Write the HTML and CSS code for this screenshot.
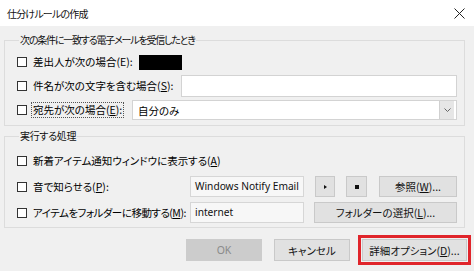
FILE: index.html
```html
<!DOCTYPE html>
<html lang="ja">
<head>
    <meta charset="UTF-8">
    <meta name="viewport" content="width=device-width, initial-scale=1.0">
    <title>仕分けルールの作成</title>
    <link rel="stylesheet" href="styles.css">
</head>
<body>
    <div class="window">
        <div class="titlebar">
            <span class="title">仕分けルールの作成</span>
            <svg class="close" width="11" height="11" viewBox="0 0 11 11">
                <path d="M0.5 0.5 L10.5 10.5 M10.5 0.5 L0.5 10.5" stroke="#222" stroke-width="1" fill="none"/>
            </svg>
        </div>

        <div class="content">
            <fieldset class="group group-cond">
                <legend class="tight">次の条件に一致する電子メールを受信したとき</legend>
                <div class="row">
                    <span class="check"></span>
                    <span class="label">差出人が次の場合(E):</span>
                    <span class="redacted"></span>
                </div>
                <div class="row">
                    <span class="check"></span>
                    <span class="label">件名が次の文字を含む場合(<u>S</u>):</span>
                    <span class="textbox subject"></span>
                </div>
                <div class="row">
                    <span class="check"></span>
                    <span class="label focused">宛先が次の場合(<u>E</u>):</span>
                    <span class="select">
                        <span class="select-text">自分のみ</span>
                        <span class="select-btn">
                            <svg width="7" height="4" viewBox="0 0 7 4"><path d="M0.5 0.5 L3.5 3.5 L6.5 0.5" stroke="#666" fill="none"/></svg>
                        </span>
                    </span>
                </div>
            </fieldset>

            <fieldset class="group group-action">
                <legend>実行する処理</legend>
                <div class="row">
                    <span class="check"></span>
                    <span class="label">新着アイテム通知ウィンドウに表示する(<u>A</u>)</span>
                </div>
                <div class="row row-grid">
                    <span class="lead">
                        <span class="check"></span>
                        <span class="label">音で知らせる(<u>P</u>):</span>
                    </span>
                    <span class="textbox readonly latin">Windows Notify Email</span>
                    <button class="btn btn-icon"><span class="play"></span></button>
                    <button class="btn btn-icon stop-btn"><span class="stop"></span></button>
                    <button class="btn btn-browse">参照(<u>W</u>)...</button>
                </div>
                <div class="row row-grid">
                    <span class="lead">
                        <span class="check"></span>
                        <span class="label narrow">アイテムをフォルダーに移動する(<u>M</u>):</span>
                    </span>
                    <span class="textbox readonly latin">internet</span>
                    <button class="btn btn-folder">フォルダーの選択(<u>L</u>)...</button>
                </div>
            </fieldset>

            <div class="buttons">
                <button class="btn btn-main" disabled>OK</button>
                <button class="btn btn-main">キャンセル</button>
                <button class="btn btn-advanced">詳細オプション(<u>D</u>)...</button>
            </div>
        </div>
    </div>
</body>
</html>
```

FILE: styles.css
```css
body {
    margin: 0;
    padding: 0;
    font-family: "Noto Sans CJK JP", sans-serif;
    font-feature-settings: "palt";
    font-size: 10.5px;
    color: #000;
    background: #f0f0f0;
}
.window {
    width: 474px;
    height: 271px;
    background: #f0f0f0;
    overflow: hidden;
}
.titlebar {
    height: 26px;
    background: #fff;
    display: flex;
    align-items: center;
    justify-content: space-between;
    padding: 0 9px 0 7px;
}
.title {
    font-size: 10px;
    letter-spacing: -0.8px;
    color: #111;
    padding-top: 1px;
}
.close {
    margin-top: 1px;
}
.content {
    padding: 0 9px 0 4px;
}
.group {
    margin: 0;
    border: 1px solid #dcdcdc;
    padding: 3px 7px 3px 12px;
}
.group legend {
    padding: 0 1px;
    margin-left: 2px;
    line-height: 14px;
    font-size: 10px;
    letter-spacing: -0.3px;
    color: #111;
}
.group legend.tight {
    letter-spacing: -1.2px;
}
.group-cond {
    margin-top: 7px;
}
.group-action {
    margin-top: 3px;
    padding-top: 6px;
    padding-bottom: 4px;
}
.row {
    display: flex;
    align-items: center;
    height: 24px;
}
.check {
    width: 8px;
    height: 8px;
    border: 1px solid #333;
    background: #fff;
    margin-right: 4px;
    flex: none;
}
.label {
    white-space: nowrap;
    line-height: 14px;
    border: 1px dotted transparent;
    padding: 0 1px;
}
.label.focused {
    border-color: #555;
}
.label.narrow {
    letter-spacing: -0.5px;
}
.redacted {
    width: 43px;
    height: 15px;
    background: #000;
    margin-left: 4px;
}
.textbox {
    height: 20px;
    background: #fff;
    border: 1px solid #d3d3d3;
    box-sizing: border-box;
}
.subject {
    width: 276px;
    height: 22px;
    margin-left: auto;
}
.select {
    margin-left: auto;
    width: 325px;
    height: 20px;
    background: #fff;
    border: 1px solid #d3d3d3;
    box-sizing: border-box;
    display: flex;
    align-items: center;
    justify-content: space-between;
}
.select-text {
    padding-left: 5px;
}
.select-btn {
    width: 14px;
    height: 18px;
    background: #e6e6e6;
    border-left: 1px solid #d0d0d0;
    display: flex;
    align-items: center;
    justify-content: center;
    margin-right: 2px;
}
.row-grid {
    height: 21px;
    margin-top: 3px;
}
.row-grid + .row-grid {
    margin-top: 5px;
}
.lead {
    display: flex;
    align-items: center;
    width: 173px;
    flex: none;
}
.readonly {
    width: 114px;
    height: 21px;
    background: #f7f7f7;
    border-color: #d6d6d6;
    padding-left: 4px;
    line-height: 19px;
    white-space: nowrap;
    overflow: hidden;
    flex: none;
}
.latin {
    font-family: "Noto Sans", sans-serif;
    font-size: 10.2px;
    color: #111;
}
.btn {
    font-family: "Noto Sans CJK JP", sans-serif;
    font-feature-settings: "palt";
    font-size: 10.5px;
    color: #111;
    background: #e1e1e1;
    border: 1px solid #c9c9c9;
    height: 21px;
    padding: 0;
    margin: 0;
    display: flex;
    align-items: center;
    justify-content: center;
    box-sizing: border-box;
    flex: none;
}
.btn-icon {
    width: 20px;
    margin-left: 11px;
}
.stop-btn {
    width: 21px;
}
.play {
    width: 0;
    height: 0;
    border-left: 3px solid #111;
    border-top: 2.5px solid transparent;
    border-bottom: 2.5px solid transparent;
}
.stop {
    width: 4px;
    height: 4px;
    background: #111;
}
.btn-browse {
    width: 78px;
    margin-left: 12px;
}
.btn-folder {
    width: 143px;
    margin-left: 10px;
}
.buttons {
    display: flex;
    margin-top: 11px;
    padding-left: 182px;
}
.btn-main {
    width: 76px;
    height: 22px;
    margin-right: 12px;
}
.btn-main:disabled {
    background: #cccccc;
    border-color: #cccccc;
    color: #8a8a8a;
    font-family: "Noto Sans", sans-serif;
}
.btn-advanced {
    width: 105px;
    height: 22px;
    outline: 3px solid #e0252b;
    outline-offset: 1px;
}
```
